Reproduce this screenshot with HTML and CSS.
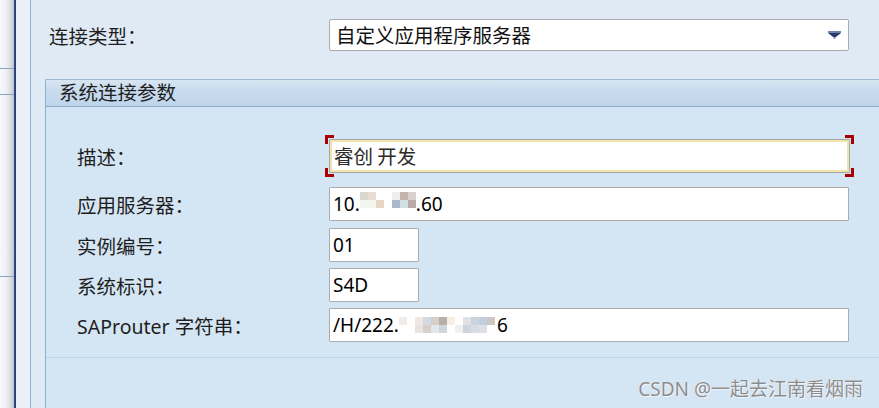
FILE: index.html
```html
<!DOCTYPE html>
<html lang="zh-CN">
<head>
<meta charset="utf-8">
<title>连接参数</title>
<link rel="stylesheet" href="styles.css">
</head>
<body>
<div class="screen">
  <div class="side">
    <div class="side-a"></div>
    <div class="side-b"></div>
    <div class="side-c"></div>
    <div class="side-d"></div>
  </div>
  <div class="bar"></div>
  <div class="rail"></div>
  <div class="main">
    <div class="type-row">
      <div class="type-label">连接类型：</div>
      <div class="select">
        <span class="select-text">自定义应用程序服务器</span>
        <svg class="arrow" width="13" height="8" viewBox="0 0 13 8">
          <rect x="0" y="0" width="13" height="2" fill="#7084ab"/>
          <polygon points="0,2 13,2 6.5,7" fill="#26396a"/>
          <rect x="5.5" y="6" width="2" height="2" fill="#8f9cba"/>
        </svg>
      </div>
    </div>
    <div class="group">
      <div class="group-head">系统连接参数</div>
      <div class="group-body">
        <div class="form">
          <div class="row">
            <div class="label">描述：</div>
            <div class="focus">
              <div class="input wide desc">睿创 开发</div>
            </div>
          </div>
          <div class="row row-app">
            <div class="label">应用服务器：</div>
            <div class="input wide">10.<span class="mosaic m-app"><i class="a1"></i><i class="a2"></i><i class="w"></i><i class="w"></i><i class="a3"></i><i class="a4"></i><i class="a5"></i><i class="a6"></i><i class="a7"></i><i class="a8"></i><i class="w"></i><i class="a9"></i><i class="a10"></i><i class="a11"></i></span>.60</div>
          </div>
          <div class="row row-inst">
            <div class="label">实例编号：</div>
            <div class="input short">01</div>
          </div>
          <div class="row">
            <div class="label">系统标识：</div>
            <div class="input short">S4D</div>
          </div>
          <div class="row">
            <div class="label">SAProuter 字符串：</div>
            <div class="input wide">/H/222.<span class="mosaic m-sap"><i class="b1"></i><i class="w"></i><i class="b2"></i><i class="b3"></i><i class="b4"></i><i class="b5"></i><i class="b6"></i><i class="w"></i><i class="b7"></i><i class="b8"></i><i class="b9"></i><i class="b10"></i><i class="w"></i><i class="w"></i><i class="b11"></i><i class="b12"></i><i class="b13"></i><i class="b14"></i><i class="w"></i><i class="b15"></i><i class="b16"></i><i class="b17"></i><i class="b18"></i><i class="w"></i></span>6</div>
          </div>
        </div>
        <div class="sep"></div>
      </div>
    </div>
  </div>
  <div class="watermark">CSDN @一起去江南看烟雨</div>
</div>
</body>
</html>
```
FILE: styles.css
```css
html, body {
  margin: 0;
  padding: 0;
}
body {
  width: 879px;
  height: 408px;
  overflow: hidden;
  font-family: "Noto Sans", "Noto Sans CJK SC", sans-serif;
  color: #1c1c1c;
}
.screen {
  position: relative;
  display: flex;
  width: 879px;
  height: 408px;
  background: #dfeaf5;
}

/* left window strip */
.side {
  width: 14px;
  display: flex;
  flex-direction: column;
  background: linear-gradient(to right, #f6f8fc 0%, #eceff4 45%, #d6dade 80%, #c2c6cc 100%);
}
.side-a { height: 68px; border-bottom: 1px solid #8ea3c0; }
.side-b { height: 25px; border-bottom: 1px solid #8ea3c0; }
.side-c { height: 181px; border-bottom: 1px solid #8ea3c0; }
.side-d { flex: 1; }
.bar {
  width: 2px;
  background: #2b4479;
}
.rail {
  width: 14px;
  background: #e9f0f8;
  border-right: 1px solid #94b4d7;
}

.main {
  flex: 1;
  display: flex;
  flex-direction: column;
  padding-left: 14px;
  min-width: 0;
}

/* connection type */
.type-row {
  display: flex;
  align-items: center;
  height: 32px;
  padding-top: 19px;
  padding-left: 4px;
}
.type-label {
  width: 280px;
  font-size: 19.5px;
  line-height: 22px;
  padding-top: 4px;
  color: #1e1e1e;
}
.select {
  width: 512px;
  height: 30px;
  box-sizing: content-box;
  border: 1px solid #a9abaf;
  border-radius: 2px;
  background: #fff;
  display: flex;
  align-items: center;
  justify-content: space-between;
  padding: 0 0 0 6px;
}
.select-text {
  font-size: 19.5px;
  line-height: 22px;
  color: #111;
  padding-top: 2px;
}
.arrow {
  margin-right: 7px;
  margin-top: -1px;
}

/* group box */
.group {
  flex: 1;
  margin-top: 28px;
  border-top: 1px solid #9db8d6;
  border-left: 1px solid #8db0d8;
  background: #d4e5f3;
  display: flex;
  flex-direction: column;
}
.group-head {
  height: 26px;
  border-bottom: 1px solid #8ca8cb;
  background: linear-gradient(to bottom, #d8e6f2 0%, #c9dcee 40%, #bfd5ea 100%);
  padding-left: 13px;
  font-size: 19.5px;
  line-height: 26px;
  color: #1e1e1e;
}
.group-body {
  flex: 1;
  display: flex;
  flex-direction: column;
}
.form {
  display: flex;
  flex-direction: column;
  gap: 6px;
  padding-top: 28px;
}
.row {
  display: flex;
  align-items: center;
}
.row-app { margin-top: 4px; }
.row-inst { margin-top: 1px; }
.label {
  width: 283px;
  box-sizing: border-box;
  padding-left: 31px;
  padding-top: 3px;
  font-size: 19.5px;
  line-height: 22px;
  color: #1e1e1e;
  white-space: nowrap;
}
.input {
  height: 32px;
  box-sizing: content-box;
  border: 1px solid #a9abaf;
  border-radius: 1px;
  background: #fff;
  display: flex;
  align-items: center;
  padding-left: 3px;
  font-size: 19px;
  line-height: 22px;
  color: #000;
  white-space: nowrap;
}
.wide { width: 515px; }
.short { width: 85px; }

/* focused description field with red corner brackets */
.focus {
  position: relative;
  margin-left: -4px;
  padding: 4px;
}
.focus::before,
.focus::after {
  content: "";
  position: absolute;
  left: 0;
  right: 0;
  height: 9px;
  pointer-events: none;
}
.focus::before {
  top: 0;
  background:
    linear-gradient(#a80000, #a80000) left top / 9px 3px no-repeat,
    linear-gradient(#a80000, #a80000) left top / 3px 9px no-repeat,
    linear-gradient(#a80000, #a80000) right top / 9px 3px no-repeat,
    linear-gradient(#a80000, #a80000) right top / 3px 9px no-repeat;
}
.focus::after {
  bottom: 0;
  background:
    linear-gradient(#a80000, #a80000) left bottom / 9px 3px no-repeat,
    linear-gradient(#a80000, #a80000) left bottom / 3px 9px no-repeat,
    linear-gradient(#a80000, #a80000) right bottom / 9px 3px no-repeat,
    linear-gradient(#a80000, #a80000) right bottom / 3px 9px no-repeat;
}
.desc {
  border-color: #a4a4a0;
  box-shadow: inset 0 0 0 2px #f1e3ae;
  padding-left: 4px;
  color: #2a2a2a;
  font-family: "Noto Sans CJK SC", sans-serif;
  font-weight: 400;
  font-size: 19.5px;
}

/* pixelated redaction */
.mosaic {
  display: inline-grid;
  grid-template-rows: 8px 8px;
}
.m-app {
  grid-template-columns: repeat(7, 8px);
  margin-bottom: 8px;
}
.m-sap {
  grid-template-columns: repeat(12, 8px);
  margin-right: 2px;
}
.mosaic i { display: block; }
.w { background: #ffffff; }
.a1 { background: #dcd6d0; }
.a2 { background: #e6dcd2; }
.a3 { background: #efeeec; }
.a4 { background: #c4b4ae; }
.a5 { background: #d8d0cc; }
.a6 { background: #f2f4ee; }
.a7 { background: #f4f4ee; }
.a8 { background: #e6d5c3; }
.a9 { background: #a9b8ca; }
.a10 { background: #d2dfe0; }
.a11 { background: #b9aaa7; }
.b1 { background: #f3ece6; }
.b2 { background: #efe8e2; }
.b3 { background: #d3dae3; }
.b4 { background: #d6cec8; }
.b5 { background: #b8aea5; }
.b6 { background: #f8efe4; }
.b7 { background: #e2e2e6; }
.b8 { background: #ccd3dd; }
.b9 { background: #bfcfe0; }
.b10 { background: #cfc6c2; }
.b11 { background: #e8e4e0; }
.b12 { background: #d6d0cc; }
.b13 { background: #e4e6ea; }
.b14 { background: #d0d6de; }
.b15 { background: #f0f0f2; }
.b16 { background: #cdd5de; }
.b17 { background: #d8dde4; }
.b18 { background: #dde0e4; }

.sep {
  margin-top: 15px;
  border-top: 1px solid #bcd5ee;
}

.watermark {
  position: absolute;
  right: 16px;
  bottom: 8px;
  font-size: 19px;
  line-height: 22px;
  color: #8c8c8c;
  text-shadow: 0 0 1px #ffffff, 1px 1px 0 rgba(255,255,255,0.6);
  font-family: "Noto Sans", "Noto Sans CJK SC", sans-serif;
}
```
